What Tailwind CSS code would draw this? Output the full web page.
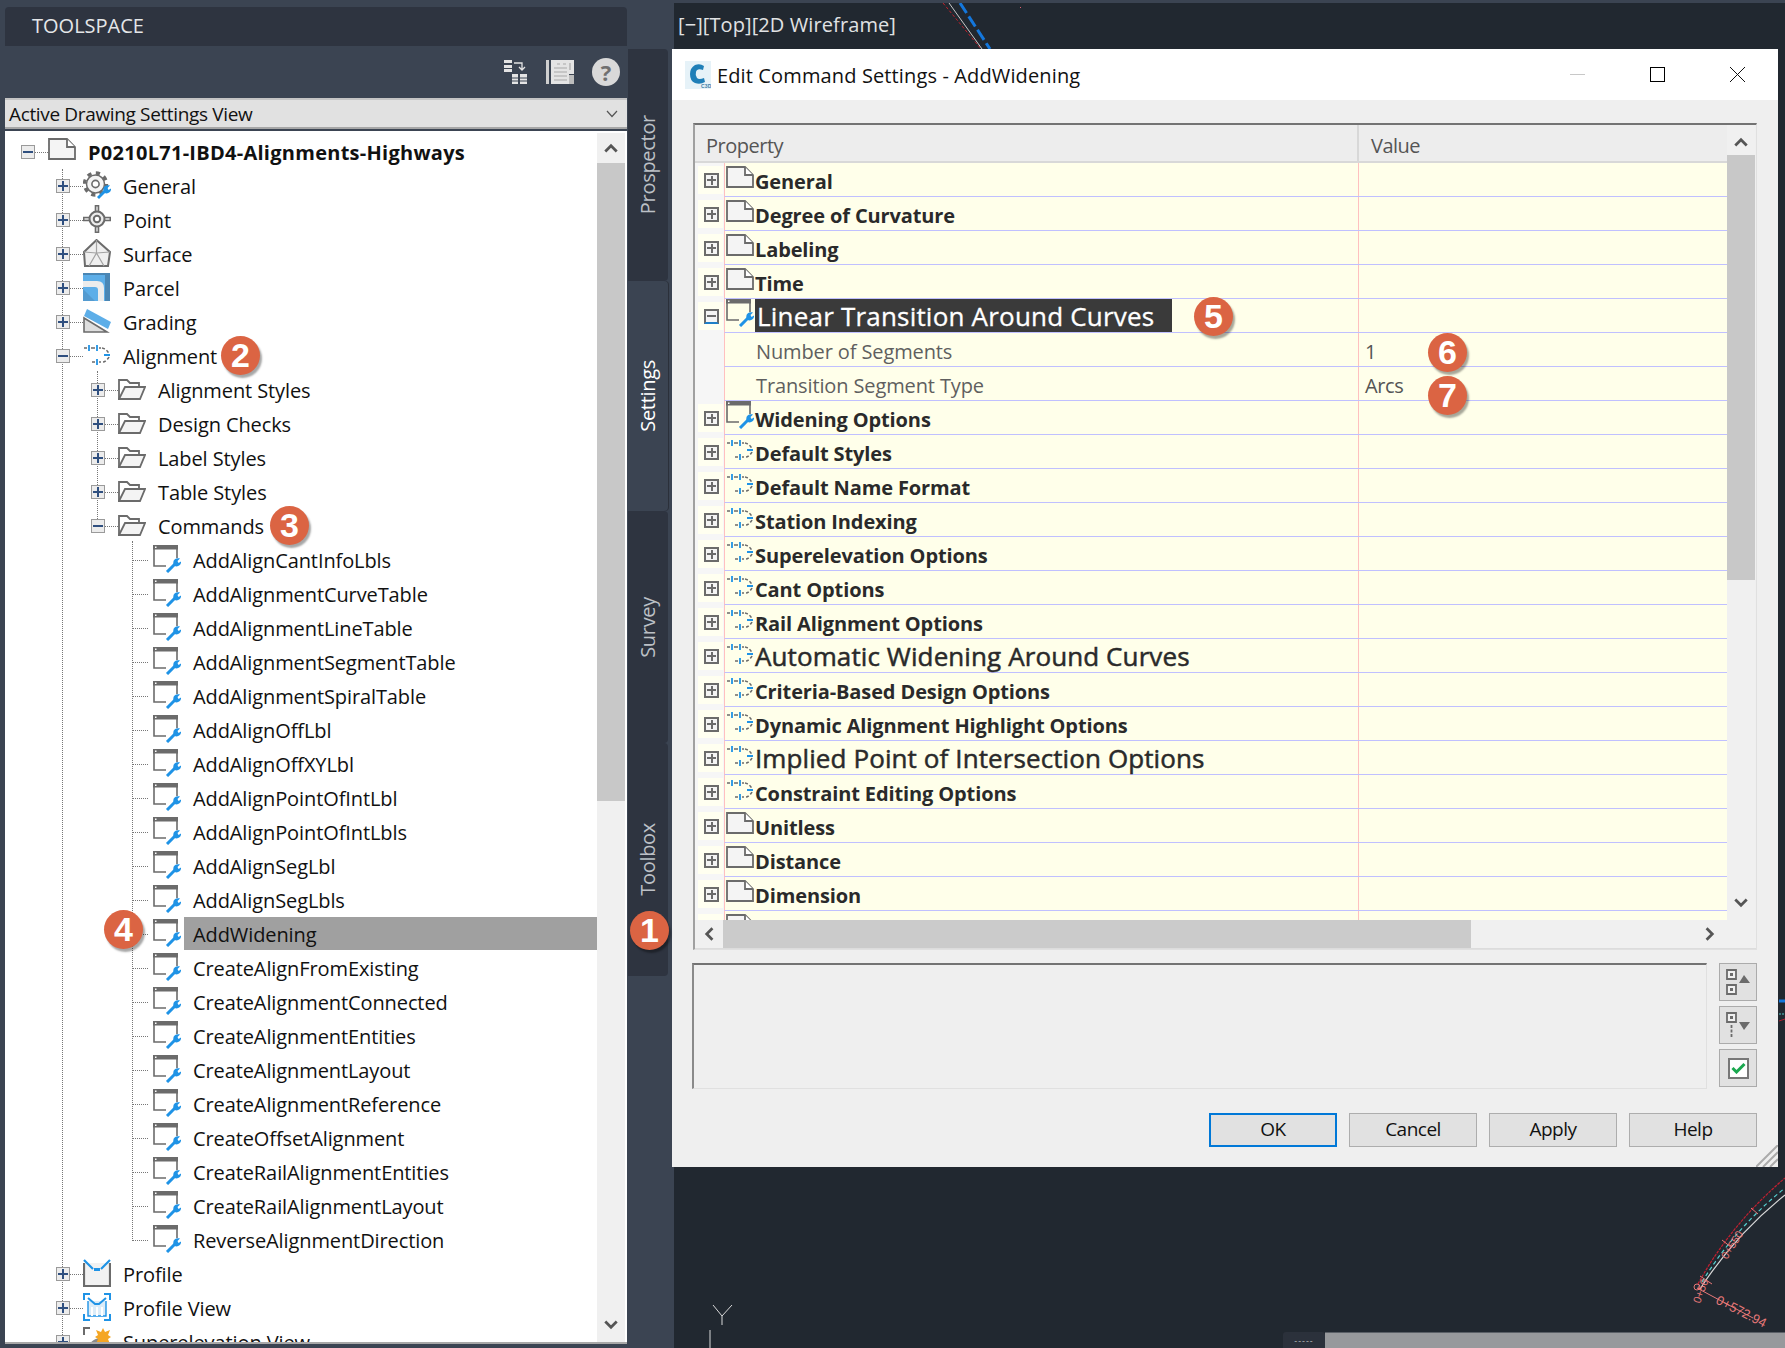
<!DOCTYPE html>
<html lang="en">
<head>
    <meta charset="UTF-8">
    <title>Toolspace - Edit Command Settings</title>
    <script src="https://cdn.jsdelivr.net/npm/@tailwindcss/browser@4"></script>
</head>
<body class="m-0 overflow-hidden">
    <!-- Shared icons -->
    <svg class="hidden">
        <symbol id="i-doc" viewBox="0 0 28 22"><path d="M1 1H19L27 9V21H1Z" fill="#f4f4f4" stroke="#6b6b6b" stroke-width="1.8"/><path d="M19 1V9H27" fill="#fff" stroke="#6b6b6b" stroke-width="1.8"/></symbol>
        <symbol id="i-cmd" viewBox="0 0 28 28"><path d="M1 4V21H13M24 4V13" fill="none" stroke="#6b6b6b" stroke-width="1.6"/><rect x="0" y="0" width="25" height="4.5" fill="#6b6b6b"/><rect x="2" y="1.5" width="1.5" height="1.5" fill="#fff"/><path d="M14 27L23 18" stroke="#1f93e6" stroke-width="3"/><path d="M20.5 19C19.5 15 22.5 12.5 27 13.5L24.5 16L25.5 18L28 16.5C28.5 20 25 22.5 21.5 21Z" fill="#1f93e6"/></symbol>
        <symbol id="i-align" viewBox="0 0 28 22"><path d="M1 4H4M8 4H12M16 4H18M9 18H12M16 18H18" stroke="#6b6b6b" stroke-width="1.6" fill="none"/><path d="M19 4C22 4.5 25 7 26 10M26 13C25 15 22 18 20 18" stroke="#6b6b6b" stroke-width="1.6" stroke-dasharray="3 2" fill="none"/><path d="M6 1V7M14 1V7M21 11H27M14 15V21" stroke="#1f93e6" stroke-width="1.8" fill="none"/></symbol>
        <symbol id="i-folder" viewBox="0 0 28 24"><path d="M1 22V3H9L12 6H21V10" fill="none" stroke="#6b6b6b" stroke-width="1.8"/><path d="M1 22L7 10H27L22 22Z" fill="#f4f4f4" stroke="#6b6b6b" stroke-width="1.8"/></symbol>
        <symbol id="i-gear" viewBox="0 0 28 28"><circle cx="12.5" cy="13" r="11" fill="none" stroke="#6b6b6b" stroke-width="3.4" stroke-dasharray="4.2 4.44"/><circle cx="12.5" cy="13" r="9" fill="#f4f4f4" stroke="#6b6b6b" stroke-width="1.5"/><circle cx="12.5" cy="13" r="3.6" fill="#fff" stroke="#6b6b6b" stroke-width="1.6"/><path d="M15 27L23 19" stroke="#1f93e6" stroke-width="2.8"/><path d="M20.5 20C19.5 16 22.5 13.5 27 14.5L24.5 17L25.5 19L28 17.5C28.5 21 25 23.5 21.5 22Z" fill="#1f93e6"/></symbol>
        <symbol id="i-point" viewBox="0 0 28 28"><path d="M14 0V8M14 20V28M0 14H8M20 14H28" stroke="#6b6b6b" stroke-width="4.6"/><path d="M14 1.5V7M14 21V26.5M1.5 14H7M21 14H26.5" stroke="#e6e6e6" stroke-width="1.4"/><circle cx="14" cy="14" r="7.5" fill="#ececec" stroke="#6b6b6b" stroke-width="2"/><circle cx="14" cy="14" r="3.2" fill="#fff" stroke="#6b6b6b" stroke-width="2"/></symbol>
        <symbol id="i-surface" viewBox="0 0 28 28"><path d="M13.5 1L27 13L25 27H2L1 13Z" fill="#efefef" stroke="#6b6b6b" stroke-width="2"/><path d="M13.5 1V14L6 27M13.5 14L21 27M1 13L13.5 14L27 13" fill="none" stroke="#a2a2a2" stroke-width="1.2"/></symbol>
        <symbol id="i-parcel" viewBox="0 0 28 28"><rect x="0" y="0" width="27" height="28" fill="#5daee8"/><path d="M0 0H27V28H22V2H0Z" fill="#4a86b4"/><path d="M0 8H14Q21 8 21 15V28H15V17Q15 14 12 14H0Z" fill="#ececec"/><path d="M0 16L12 28H0Z" fill="#4a86b4" opacity=".45"/></symbol>
        <symbol id="i-grading" viewBox="0 0 28 24"><path d="M1 9V23H24Z" fill="#dedede" stroke="#6b6b6b" stroke-width="1.6"/><path d="M4 0L28 13L25 20L1 7Z" fill="#5daee8"/></symbol>
        <symbol id="i-profile" viewBox="0 0 28 28"><path d="M1 4V27H27V4" fill="#f2f2f2" stroke="#6b6b6b" stroke-width="2.2"/><path d="M1 1L10 10M18 10L27 1" stroke="#1f93e6" stroke-width="2.2"/><rect x="11" y="9" width="6" height="3" fill="#1f93e6"/></symbol>
        <symbol id="i-pview" viewBox="0 0 28 28"><path d="M1 7V1H7M21 1H27V7M1 21V27H7M21 27H27V21" fill="none" stroke="#1f93e6" stroke-width="2"/><path d="M5 8V23H23V8" fill="#dcecf8" stroke="#1f93e6" stroke-width="1.4"/><path d="M9 14V23M14 14V23M19 14V23" stroke="#fff" stroke-width="2"/><path d="M5 5L12 11H16L23 5" fill="none" stroke="#1f93e6" stroke-width="2"/></symbol>
        <symbol id="i-super" viewBox="0 0 28 28"><path d="M1 8V1H7" fill="none" stroke="#6b6b6b" stroke-width="2"/><path d="M3 26Q6 12 17 11L22 26Z" fill="#8a8a8a"/><path d="M20 1L22 5L27 3L25 8L28 10L25 12L27 17L22 15L20 19L18 15L13 17L15 12L12 10L15 8L13 3L18 5Z" fill="#f5a623"/></symbol>
    </svg>

    <div class="relative flex h-[1348px] w-[1785px] overflow-hidden bg-[#3b4452] font-['Open_Sans',sans-serif]">
        <!-- Toolspace -->
        <aside class="flex w-[628px] shrink-0 flex-col pl-[5px] pr-px pt-[7px] pb-[4px]">
            <div class="flex h-[39px] items-center rounded-t-[4px] bg-[#2e3440] pb-[2px] pl-[27px] text-[20px] text-[#e4e6e8]">TOOLSPACE</div>
            <div class="flex h-[52px] items-center justify-end gap-[18px] rounded-t-[4px] pr-[7px]">
                <svg class="h-[24px] w-[25px]" viewBox="0 0 25 24"><path d="M1 0H9V3H1ZM1 5H9V8H1ZM1 9H9V12H1Z" fill="#e4e4e4"/><path d="M11 3H19V9M16 7L19 10L22 7" fill="none" stroke="#e4e4e4" stroke-width="1.3"/><path d="M9 14H15V24H9ZM17 14H24V24H17Z" fill="#e4e4e4"/><path d="M9 18H15M9 21H15M17 18H24M17 21H24" stroke="#3b4452"/></svg>
                <svg class="h-[24px] w-[28px]" viewBox="0 0 28 24"><rect x="0" y="0" width="3" height="24" fill="#cfcfcf"/><path d="M5 0H28V14H23V24H5Z" fill="#e4e4e4"/><rect x="23" y="15" width="5" height="9" fill="#bdbdbd"/><path d="M8 8H21M8 12H21M8 16H21M8 20H21M11 4H14M17 4H20M24 3V10" stroke="#a8a8a8" stroke-width="1.2"/></svg>
                <div class="flex h-[28px] w-[28px] items-center justify-center rounded-full bg-[#d9d9d9] text-[22px] font-bold text-[#707070]">?</div>
            </div>
            <div class="flex h-[31px] items-center justify-between border-y-2 border-t-[#c4c4c4] border-b-[#a6a6a6] bg-[#e1e1e1] pl-[4px] pr-[9px] text-[19px] tracking-[-0.35px] text-[#111]">
                <span class="pt-[2px]">Active Drawing Settings View</span>
                <svg class="h-[8px] w-[12px]" viewBox="0 0 12 8"><path d="M1 1L6 6.5L11 1" fill="none" stroke="#555" stroke-width="1.2"/></svg>
            </div>
            <div class="mt-[2px] flex min-h-0 flex-1 border-b-2 border-[#a8a8a8] bg-white pt-[2px]">
                <div id="tree" class="relative min-w-0 flex-1 overflow-hidden pt-px"></div>
                <div class="mr-[2px] flex w-[28px] shrink-0 flex-col bg-[#f0f0f0]">
                    <div class="flex h-[30px] items-center justify-center">
                        <svg class="h-[12px] w-[16px]" viewBox="0 0 14 10"><path d="M2 8L7 3L12 8" fill="none" stroke="#555" stroke-width="2.4"/></svg>
                    </div>
                    <div class="h-[638px] bg-[#c8c8c8]"></div>
                    <div class="flex flex-1 items-end justify-center pb-[11px]">
                        <svg class="h-[12px] w-[16px]" viewBox="0 0 14 10"><path d="M2 2L7 7L12 2" fill="none" stroke="#555" stroke-width="2.4"/></svg>
                    </div>
                </div>
            </div>
        </aside>

        <!-- Side tabs -->
        <nav class="flex w-[46px] shrink-0 flex-col pt-[49px]">
            <div class="flex h-[232px] w-[40px] items-center justify-center rounded-r-[4px] bg-[#2e3440]"><span class="rotate-180 text-[20px] tracking-[-0.3px] text-[#bcc0c6] [writing-mode:vertical-rl]">Prospector</span></div>
            <div class="flex h-[230px] w-[40px] items-center justify-center rounded-r-[4px] bg-[#3b4452] shadow-[1px_0_0_#2b303a]"><span class="rotate-180 text-[20px] tracking-[-0.3px] text-white [writing-mode:vertical-rl]">Settings</span></div>
            <div class="flex h-[232px] w-[40px] items-center justify-center rounded-r-[4px] bg-[#2e3440]"><span class="rotate-180 text-[20px] tracking-[-0.3px] text-[#bcc0c6] [writing-mode:vertical-rl]">Survey</span></div>
            <div class="flex h-[233px] w-[40px] items-center justify-center rounded-r-[4px] bg-[#2e3440]"><span class="rotate-180 text-[20px] tracking-[-0.3px] text-[#bcc0c6] [writing-mode:vertical-rl]">Toolbox</span></div>
        </nav>

        <!-- Drawing viewport -->
        <main class="relative mt-[3px] min-w-0 flex-1 bg-[#212830]">
            <svg class="absolute inset-0 h-full w-full" viewBox="674 3 1111 1345">
                <path d="M943 3L981 49" stroke="#c0202a" stroke-dasharray="3 2" fill="none"/>
                <path d="M949 3L982 49" stroke="#c8c8c8" fill="none"/>
                <path d="M960 3L990 49" stroke="#1477dc" stroke-width="3" stroke-dasharray="12 4" fill="none"/>
                <rect x="1020" y="7" width="1" height="1" fill="#e06070"/>
                <path d="M1700 1289Q1735 1235 1785 1195" stroke="#d8d8d8" stroke-width="1.2" fill="none"/>
                <path d="M1702 1282Q1735 1228 1785 1188" stroke="#55d0d0" stroke-width="1.2" stroke-dasharray="4 3" fill="none"/>
                <path d="M1698 1284Q1730 1225 1785 1178" stroke="#c02030" stroke-width="1.2" stroke-dasharray="3 1" fill="none"/>
                <path d="M1697 1288L1753 1318M1700 1276L1712 1284M1722 1240L1732 1248M1751 1208L1758 1214" stroke="#e87878" fill="none"/>
                <circle cx="1697" cy="1287" r="3" stroke="#e87878" fill="none"/>
                <text x="1715" y="1303" transform="rotate(27 1715 1303)" fill="#e87878" font-size="13" font-family="Liberation Sans">0+572.94</text>
                <text x="1727" y="1260" transform="rotate(-58 1727 1260)" fill="#e87878" font-size="11" font-family="Liberation Sans">0+550</text>
                <text x="1700" y="1304" transform="rotate(-70 1700 1304)" fill="#e87878" font-size="11" font-family="Liberation Sans">0+56</text>
                <path d="M1779 1001H1785" stroke="#1477dc" stroke-width="3"/>
                <path d="M1779 1014H1785" stroke="#55c8c8" stroke-dasharray="2 1"/>
                <path d="M1779 1021L1785 1019" stroke="#b02030"/>
                <path d="M713 1305L722 1316L732 1305M722 1316V1325M710 1330V1348" stroke="#d8d8d8" fill="none"/>
            </svg>
            <div class="relative pl-[4px] pt-[7px] text-[20px] leading-[30px] tracking-[0.1px] text-[#e0e2e4]">[&#8722;][Top][2D Wireframe]</div>
            <footer class="absolute bottom-0 left-[609px] right-0 flex h-[16px]">
                <div class="flex w-[42px] items-center justify-center rounded-t-[3px] bg-[#2b313b] text-[9px] leading-none tracking-[1px] text-[#b8b8b8]">-----</div>
                <div class="flex-1 border-t border-[#5a5f66] bg-[#97999c]"></div>
            </footer>
        </main>

        <!-- Edit Command Settings dialog -->
        <section class="absolute left-[672px] top-[49px] flex h-[1118px] w-[1106px] flex-col bg-[#efefef]">
            <header class="flex h-[51px] shrink-0 items-center bg-white pl-[13px] text-[20px] tracking-[0.13px] text-[#111]">
                <svg class="h-[28px] w-[26px]" viewBox="0 0 26 28"><rect width="26" height="28" fill="#e6f2f8"/><path d="M19 5Q15 2 10 4Q5 7 5 13Q5 20 10 22Q15 24 20 21L19 17Q14 19 12 17Q10 14 11 11Q12 7 18 9Z" fill="#1f7fb8"/><text x="16" y="27" font-size="5" font-weight="700" fill="#3b7ea8" font-family="Liberation Sans">C3D</text></svg>
                <span class="ml-[6px] pt-[2px]">Edit Command Settings - AddWidening</span>
                <div class="ml-auto flex items-center gap-[65px] pr-[33px]">
                    <div class="h-px w-[15px] bg-[#c8c8c8]"></div>
                    <div class="h-[15px] w-[15px] border border-black"></div>
                    <svg class="h-[15px] w-[15px]" viewBox="0 0 15 15"><path d="M0 0L15 15M15 0L0 15" stroke="#111"/></svg>
                </div>
            </header>

            <div class="ml-[21px] mt-[23px] flex h-[827px] w-[1064px] shrink-0 flex-col border-t-2 border-l-2 border-r border-b border-t-[#737373] border-l-[#a0a0a0] border-r-[#e0e0e0] border-b-[#e0e0e0]">
                <div class="flex min-h-0 flex-1">
                    <div class="flex min-w-0 flex-1 flex-col">
                        <div class="flex h-[38px] shrink-0 items-center border-b-2 border-[#d8d8d8] bg-[#ededed] text-[20px] tracking-[-0.5px] text-[#555]">
                            <div class="w-[664px] border-r-2 border-[#d8d8d8] pl-[11px] pt-[6px] leading-[30px]">Property</div>
                            <div class="pl-[12px] pt-[6px]">Value</div>
                        </div>
                        <div id="props" class="min-h-0 flex-1 overflow-hidden"></div>
                    </div>
                    <div class="mr-px flex w-[28px] shrink-0 flex-col bg-[#f0f0f0]">
                        <div class="flex h-[30px] items-center justify-center pt-[4px]">
                            <svg class="h-[12px] w-[16px]" viewBox="0 0 14 10"><path d="M2 8L7 3L12 8" fill="none" stroke="#555" stroke-width="2.4"/></svg>
                        </div>
                        <div class="h-[425px] bg-[#c8c8c8]"></div>
                        <div class="flex flex-1 items-end justify-center pb-[11px]">
                            <svg class="h-[12px] w-[16px]" viewBox="0 0 14 10"><path d="M2 2L7 7L12 2" fill="none" stroke="#555" stroke-width="2.4"/></svg>
                        </div>
                    </div>
                </div>
                <div class="flex h-[29px] shrink-0 border-b border-[#dcdcdc] bg-[#f0f0f0]">
                    <div class="flex w-[28px] items-center justify-center">
                        <svg class="h-[16px] w-[12px]" viewBox="0 0 10 14"><path d="M8 2L3 7L8 12" fill="none" stroke="#555" stroke-width="2.4"/></svg>
                    </div>
                    <div class="w-[748px] bg-[#cbcbcb]"></div>
                    <div class="flex flex-1 items-center justify-end pr-[40px]">
                        <svg class="h-[16px] w-[12px]" viewBox="0 0 10 14"><path d="M2 2L7 7L2 12" fill="none" stroke="#555" stroke-width="2.4"/></svg>
                    </div>
                </div>
            </div>

            <div class="ml-[20px] mt-[13px] flex h-[126px] shrink-0">
                <div class="w-[1015px] border-t-2 border-l-2 border-r border-b border-t-[#737373] border-l-[#8a8a8a] border-r-[#e0e0e0] border-b-[#e0e0e0]"></div>
                <div class="ml-[12px] flex w-[38px] flex-col gap-[5px]">
                    <div class="flex h-[38px] items-center justify-center border border-[#ababab] bg-[#e1e1e1]">
                        <svg class="h-[28px] w-[26px]" viewBox="0 0 26 28"><path d="M2 2H11V11H2ZM2 17H11V26H2Z" fill="#f0f0f0" stroke="#6b6b6b" stroke-width="1.8"/><path d="M5 5H8V8H5ZM5 20H8V23H5Z" fill="#6b6b6b"/><path d="M14 15L19 7L25 15Z" fill="#6b6b6b"/></svg>
                    </div>
                    <div class="flex h-[38px] items-center justify-center border border-[#ababab] bg-[#e1e1e1]">
                        <svg class="h-[28px] w-[26px]" viewBox="0 0 26 28"><path d="M2 2H11V11H2Z" fill="#f0f0f0" stroke="#6b6b6b" stroke-width="1.8"/><path d="M5 5H8V8H5Z" fill="#6b6b6b"/><path d="M6.5 14V27" stroke="#6b6b6b" stroke-width="1.8" stroke-dasharray="3 1.5"/><path d="M14 11H25L19 19Z" fill="#6b6b6b"/></svg>
                    </div>
                    <div class="flex h-[38px] items-center justify-center border border-[#ababab] bg-[#e1e1e1]">
                        <div class="flex h-[21px] w-[21px] items-center justify-center border-2 border-[#777] bg-white">
                            <svg class="h-[12px] w-[15px]" viewBox="0 0 15 12"><path d="M1.5 6L5.5 10L13.5 2" fill="none" stroke="#1aa84f" stroke-width="3"/></svg>
                        </div>
                    </div>
                </div>
            </div>

            <div class="mt-[24px] flex shrink-0 justify-end gap-[12px] pr-[21px] text-[19px] tracking-[-0.5px] text-[#111]">
                <button class="h-[34px] w-[128px] border-2 border-[#0078d7] bg-[#e1e1e1] pb-[2px]">OK</button>
                <button class="h-[34px] w-[128px] border border-[#adadad] bg-[#e1e1e1] pb-[2px]">Cancel</button>
                <button class="h-[34px] w-[128px] border border-[#adadad] bg-[#e1e1e1] pb-[2px]">Apply</button>
                <button class="h-[34px] w-[128px] border border-[#adadad] bg-[#e1e1e1] pb-[2px]">Help</button>
            </div>
            <svg class="absolute bottom-0 right-0 h-[22px] w-[22px]" viewBox="0 0 22 22"><path d="M0 22L22 0M7 22L22 7M14 22L22 14" stroke="#ababab" stroke-width="2"/></svg>
        </section>

        <!-- Callouts -->
        <div class="absolute left-[630px] top-[911px] flex h-[39px] w-[39px] items-center justify-center rounded-full bg-[#db6443] font-['Liberation_Sans'] text-[34px] font-bold text-white shadow-[2px_3px_2px_rgba(0,0,0,0.35)]">1</div>
        <div class="absolute left-[221px] top-[336px] flex h-[39px] w-[39px] items-center justify-center rounded-full bg-[#db6443] font-['Liberation_Sans'] text-[34px] font-bold text-white shadow-[2px_3px_2px_rgba(0,0,0,0.35)]">2</div>
        <div class="absolute left-[270px] top-[506px] flex h-[39px] w-[39px] items-center justify-center rounded-full bg-[#db6443] font-['Liberation_Sans'] text-[34px] font-bold text-white shadow-[2px_3px_2px_rgba(0,0,0,0.35)]">3</div>
        <div class="absolute left-[104px] top-[910px] flex h-[39px] w-[39px] items-center justify-center rounded-full bg-[#db6443] font-['Liberation_Sans'] text-[34px] font-bold text-white shadow-[2px_3px_2px_rgba(0,0,0,0.35)]">4</div>
        <div class="absolute left-[1194px] top-[297px] flex h-[39px] w-[39px] items-center justify-center rounded-full bg-[#db6443] font-['Liberation_Sans'] text-[34px] font-bold text-white shadow-[2px_3px_2px_rgba(0,0,0,0.35)]">5</div>
        <div class="absolute left-[1428px] top-[333px] flex h-[39px] w-[39px] items-center justify-center rounded-full bg-[#db6443] font-['Liberation_Sans'] text-[34px] font-bold text-white shadow-[2px_3px_2px_rgba(0,0,0,0.35)]">6</div>
        <div class="absolute left-[1428px] top-[376px] flex h-[39px] w-[39px] items-center justify-center rounded-full bg-[#db6443] font-['Liberation_Sans'] text-[34px] font-bold text-white shadow-[2px_3px_2px_rgba(0,0,0,0.35)]">7</div>
    </div>

    <script>
        const icon = (name, cls) => `<svg class="${cls} shrink-0"><use href="#i-${name}"></use></svg>`;

        // Tree box: plus or minus
        const treeBox = open => `<span class="relative z-10 mt-[2px] flex h-[14px] w-[14px] shrink-0 items-center justify-center border border-[#9a9a9a] bg-[#ececec]">
            <span class="absolute h-[1.5px] w-[10px] bg-[#2f4f7f]"></span>${open ? '' : '<span class="absolute h-[10px] w-[1.5px] bg-[#2f4f7f]"></span>'}</span>`;

        const levels = {
            root: { row: 'pl-[16px]', line: 'w-[13px]', icon: 'h-[22px] w-[28px] mb-[4px]' },
            one: { row: 'pl-[51px]', line: 'w-[13px]', icon: 'h-[28px] w-[28px]' },
            two: { row: 'pl-[86px]', line: 'w-[13px]', icon: 'h-[24px] w-[28px]' },
            three: { row: 'pl-[127px]', line: 'w-[16px] mr-[5px]', icon: 'h-[28px] w-[28px]' }
        };

        const treeRows = [
            ['root', 'doc', 'P0210L71-IBD4-Alignments-Highways', 'open'],
            ['one', 'gear', 'General', 'closed'], ['one', 'point', 'Point', 'closed'],
            ['one', 'surface', 'Surface', 'closed'], ['one', 'parcel', 'Parcel', 'closed'],
            ['one', 'grading', 'Grading', 'closed'], ['one', 'align', 'Alignment', 'open'],
            ['two', 'folder', 'Alignment Styles', 'closed'], ['two', 'folder', 'Design Checks', 'closed'],
            ['two', 'folder', 'Label Styles', 'closed'], ['two', 'folder', 'Table Styles', 'closed'],
            ['two', 'folder', 'Commands', 'open']
        ];
        ['AddAlignCantInfoLbls', 'AddAlignmentCurveTable', 'AddAlignmentLineTable', 'AddAlignmentSegmentTable',
         'AddAlignmentSpiralTable', 'AddAlignOffLbl', 'AddAlignOffXYLbl', 'AddAlignPointOfIntLbl', 'AddAlignPointOfIntLbls',
         'AddAlignSegLbl', 'AddAlignSegLbls', 'AddWidening', 'CreateAlignFromExisting', 'CreateAlignmentConnected',
         'CreateAlignmentEntities', 'CreateAlignmentLayout', 'CreateAlignmentReference', 'CreateOffsetAlignment',
         'CreateRailAlignmentEntities', 'CreateRailAlignmentLayout', 'ReverseAlignmentDirection']
            .forEach(name => treeRows.push(['three', 'cmd', name]));
        treeRows.push(['one', 'profile', 'Profile', 'closed'], ['one', 'pview', 'Profile View', 'closed'], ['one', 'super', 'Superelevation View', 'closed']);

        const tree = document.getElementById('tree');
        tree.innerHTML = `
            <span class="absolute left-[57px] top-[36px] h-[1250px] border-l border-dotted border-[#777]"></span>
            <span class="absolute left-[92px] top-[238px] h-[158px] border-l border-dotted border-[#777]"></span>
            <span class="absolute left-[127px] top-[408px] h-[698px] border-l border-dotted border-[#777]"></span>`;
        treeRows.forEach(([level, ic, text, state]) => {
            const l = levels[level];
            const selected = text === 'AddWidening';
            const textClass = level === 'root'
                ? 'ml-[12px] pt-[4px] font-bold tracking-[0.27px]'
                : selected
                    ? 'ml-[3px] flex h-[33px] flex-1 items-center bg-[#a0a0a0] pl-[9px] pt-[4px] tracking-[-0.1px]'
                    : 'ml-[12px] pt-[4px] tracking-[-0.1px]';
            tree.insertAdjacentHTML('beforeend', `<div class="relative flex h-[34px] items-center text-[20px] text-[#111] ${l.row}">
                ${state ? treeBox(state === 'open') : ''}
                <span class="mt-[2px] h-0 shrink-0 border-t border-dotted border-[#777] ${l.line}"></span>
                ${icon(ic, l.icon)}
                <span class="${textClass}">${text}</span>
            </div>`);
        });

        // Property grid
        const propRows = [
            ['doc', 'General'], ['doc', 'Degree of Curvature'], ['doc', 'Labeling'], ['doc', 'Time'],
            ['cmd', 'Linear Transition Around Curves', 'selected'],
            [null, 'Number of Segments', '1'], [null, 'Transition Segment Type', 'Arcs'],
            ['cmd', 'Widening Options'], ['align', 'Default Styles'], ['align', 'Default Name Format'],
            ['align', 'Station Indexing'], ['align', 'Superelevation Options'], ['align', 'Cant Options'],
            ['align', 'Rail Alignment Options'], ['align', 'Automatic Widening Around Curves', 'big'],
            ['align', 'Criteria-Based Design Options'], ['align', 'Dynamic Alignment Highlight Options'],
            ['align', 'Implied Point of Intersection Options', 'big'], ['align', 'Constraint Editing Options'],
            ['doc', 'Unitless'], ['doc', 'Distance'], ['doc', 'Dimension'], ['doc', '']
        ];
        const propIcon = {
            doc: 'mt-[3px] h-[22px] w-[28px]',
            cmd: 'h-[28px] w-[28px]',
            align: 'mt-[4px] h-[22px] w-[28px]'
        };
        const props = document.getElementById('props');
        propRows.forEach(([ic, text, extra]) => {
            const selected = extra === 'selected';
            const big = extra === 'big';
            const child = ic === null;
            const open = selected;
            let label = 'pt-[4px] text-[20px] font-bold tracking-[-0.12px] text-[#2a2a2a]';
            if (selected) label = 'flex h-[33px] w-[417px] items-center bg-[#3a3a3a] pl-[2px] pt-[2px] text-[26px] tracking-[0.2px] text-white [-webkit-text-stroke:0.3px_#ffffff]';
            if (big) label = 'pt-[2px] text-[26px] tracking-[0.1px] text-[#2a2a2a] [-webkit-text-stroke:0.5px_#2a2a2a]';
            if (child) label = 'pl-[1px] pt-[4px] text-[20px] tracking-[-0.12px] text-[#5f5f5f]';
            props.insertAdjacentHTML('beforeend', `<div class="flex h-[34px] shrink-0">
                <div class="flex w-[29px] shrink-0 bg-[#f6f6f6] pl-[3px] py-[3px]">
                    <div class="flex w-[25px] items-center justify-center pl-[2px] ${child ? 'bg-[#f6f6f6]' : 'bg-[#fffff0]'}">
                        ${child ? '' : `<span class="relative flex h-[15px] w-[15px] items-center justify-center border-2 border-[#6b6b6b] ${open ? 'border-b-[#1f7fc8]' : ''} bg-[#f4f4f4]">
                            <span class="absolute h-[2px] w-[9px] bg-[#6b6b6b]"></span>${open ? '' : '<span class="absolute h-[9px] w-[2px] bg-[#6b6b6b]"></span>'}</span>`}
                    </div>
                </div>
                <div class="flex min-w-0 flex-1 border-b border-l border-b-[#c0c0ff] border-l-[#ffc0c0] bg-[#ffffea]">
                    <div class="relative flex w-[633px] shrink-0 items-center">
                        <div class="flex w-[30px] shrink-0 self-start pl-px">${ic ? icon(ic, propIcon[ic]) : ''}</div>
                        <span class="${label}">${text}</span>
                    </div>
                    <div class="flex flex-1 items-center border-l border-[#ffc0c0] pl-[6px] pt-[4px] text-[20px] tracking-[-0.4px] text-[#555]">${child ? extra : ''}</div>
                </div>
            </div>`);
        });
    </script>
</body>
</html>
